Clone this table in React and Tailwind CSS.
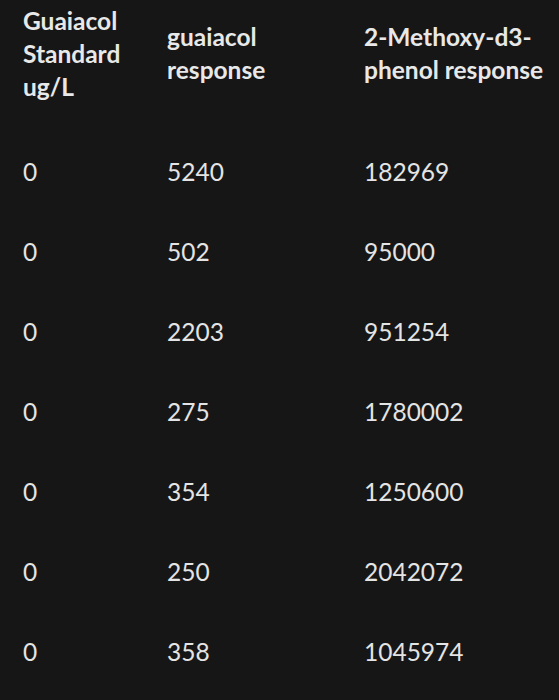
import React from "react";

const rows = [
  ["0", "5240", "182969"],
  ["0", "502", "95000"],
  ["0", "2203", "951254"],
  ["0", "275", "1780002"],
  ["0", "354", "1250600"],
  ["0", "250", "2042072"],
  ["0", "358", "1045974"],
];

export default function App() {
  return (
    <div
      className="w-[559px] h-[700px] overflow-hidden bg-[#161616] text-[#e4e4e4] text-[24.5px]"
      style={{ fontFamily: "Lato, 'Open Sans', sans-serif" }}
    >
      <div className="grid grid-cols-[144px_197px_1fr] h-[132px] pt-[2px] pb-[28px] font-bold leading-[33px] text-[#e8e8e8]">
        <div className="pl-[23px] self-center">
          Guaiacol
          <br />
          Standard
          <br />
          ug/L
        </div>
        <div className="pl-[23px] self-center">
          guaiacol
          <br />
          response
        </div>
        <div className="pl-[23px] self-center">
          2-Methoxy-d3-
          <br />
          phenol response
        </div>
      </div>
      {rows.map((r, i) => (
        <div key={i} className="grid grid-cols-[144px_197px_1fr] h-[80px] items-center">
          {r.map((c, j) => (
            <div key={j} className="pl-[23px]">
              {c}
            </div>
          ))}
        </div>
      ))}
    </div>
  );
}
